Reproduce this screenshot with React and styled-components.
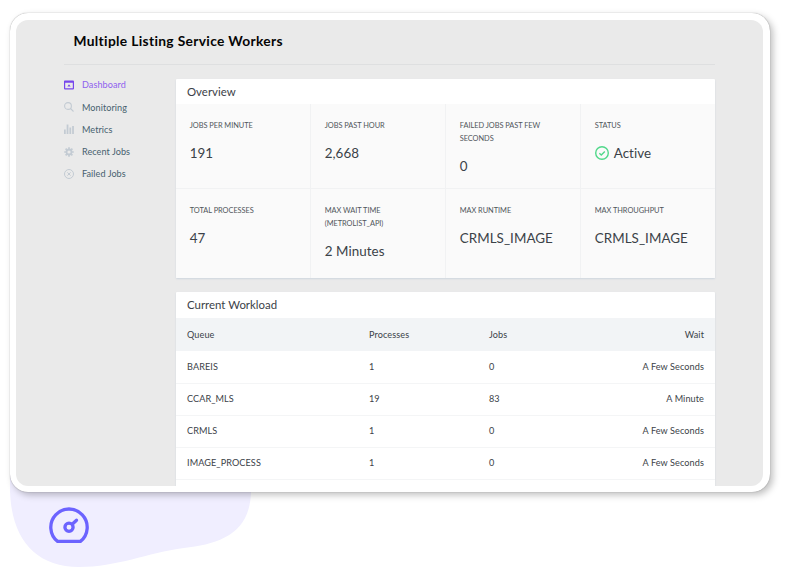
import styled, { createGlobalStyle } from 'styled-components';

const GlobalStyle = createGlobalStyle`
  * {
    box-sizing: border-box;
  }
  body {
    margin: 0;
    background: #fff;
    color: #3b4248;
    font-family: Lato, "Open Sans", sans-serif;
  }
`

const Page = styled.div`
  width: 800px;
  height: 585px;
  padding: 13px 0 0 10px;
  overflow: hidden;
`

const Frame = styled.div`
  position: relative;
  z-index: 1;
  width: 760px;
  height: 479px;
  padding: 7px 7px 6px 6px;
  border-radius: 18px;
  background: #fff;
  box-shadow: 0 0 1px rgba(0, 0, 0, 0.45), 3px 3px 7px rgba(0, 0, 0, 0.25);
`

const Screen = styled.div`
  height: 466px;
  padding: 0 48px;
  border-radius: 12px;
  background: #eaeaea;
  overflow: hidden;
`

const Header = styled.header`
  display: flex;
  align-items: center;
  height: 45px;
  padding: 0 0 4px 9.5px;
  border-bottom: 1px solid #dedfe0;
`

const Title = styled.h1`
  margin: 0;
  color: #050505;
  font-size: 13.8px;
  font-weight: 700;
  letter-spacing: 0.33px;
`

const Body = styled.div`
  display: flex;
  padding-top: 14px;
`

const Sidebar = styled.nav`
  display: flex;
  flex-direction: column;
  flex: 0 0 112px;
  margin-top: -5.4px;
`

const NavItem = styled.a`
  display: flex;
  align-items: center;
  gap: 8px;
  height: 22.3px;
  color: ${props => props.$active ? '#8f62ee' : '#47616f'};
  font-size: 9.1px;
  letter-spacing: 0.05px;

  svg {
    width: 10px;
    height: 10px;
    color: ${props => props.$active ? '#7746ec' : '#c3cbd3'};
  }
`

const Main = styled.main`
  flex: 0 0 539px;
`

const Card = styled.section`
  margin-bottom: 14px;
  border-radius: 1px;
  background: #fff;
  box-shadow: 0 1px 2px #cdd5de;
  overflow: hidden;
`

const CardHeader = styled.h2`
  display: flex;
  align-items: center;
  height: ${props => props.$height}px;
  margin: 0;
  padding: 0 0 1px 11px;
  font-size: 11.4px;
  font-weight: 400;
  letter-spacing: 0.02px;
`

const StatGrid = styled.div`
  display: grid;
  grid-template-columns: 135px 135px 135px 1fr;
  grid-template-rows: 85px 89px;
  background: #fafafa;
`

const Stat = styled.div`
  padding: 14.5px 12px 0 13.7px;
  border-right: 1px solid #f1f2f3;
  border-bottom: 1px solid #f1f2f3;

  &:nth-child(4n) {
    border-right: 0;
  }
  &:nth-child(n + 5) {
    border-bottom: 0;
  }
`

const StatLabel = styled.div`
  color: #50565b;
  font-size: 7.4px;
  line-height: 13px;
  letter-spacing: -0.03px;
  text-transform: uppercase;
  white-space: pre-line;
`

const StatValue = styled.div`
  display: flex;
  align-items: center;
  gap: 5px;
  height: 18px;
  margin-top: 12.5px;
  font-size: 13.4px;
  letter-spacing: 0.06px;

  svg {
    width: 14px;
    height: 14px;
    color: #51d88a;
  }
`

const Table = styled.table`
  width: 100%;
  table-layout: fixed;
  border-collapse: collapse;
  font-size: 9.1px;
  letter-spacing: 0.1px;

  th, td {
    height: 32px;
    padding: 0 0 1px 11px;
    border-bottom: 1px solid #f4f5f6;
    font-weight: 400;
    text-align: left;
  }
  th {
    height: 33px;
    border-bottom: 0;
    background: #f2f4f6;
  }
  th:last-child, td:last-child {
    padding-right: 11px;
    text-align: right;
  }
`

const Blob = styled.svg`
  display: block;
  width: 242px;
  height: 97px;
  margin-top: -22px;
`

function DashboardIcon() {
  return (
    <svg viewBox="0 0 20 20" fill="currentColor">
      <path fillRule="evenodd" d="M0 3c0-1.1.9-2 2-2h16a2 2 0 0 1 2 2v14a2 2 0 0 1-2 2H2a2 2 0 0 1-2-2V3zm2.4 2.5v11h15.2v-11H2.4zm4.4 7.5L10 8.5l3.2 4.5H6.8z" />
    </svg>
  )
}

function SearchIcon() {
  return (
    <svg viewBox="0 0 20 20" fill="none" stroke="currentColor" strokeWidth="2.2">
      <circle cx="8" cy="8" r="6.8" />
      <path d="m13 13 6 6" />
    </svg>
  )
}

function MetricsIcon() {
  return (
    <svg viewBox="0 0 20 20" fill="currentColor">
      <path d="M0 11h3.5v9H0zM5.3 1h3.5v19H5.3zM10.8 7h3.5v13h-3.5zM16.3 4h3.5v16h-3.5z" />
    </svg>
  )
}

function GearIcon() {
  return (
    <svg viewBox="0 0 20 20" fill="none" stroke="currentColor">
      <circle cx="10" cy="10" r="5" strokeWidth="3.6" />
      <path strokeWidth="3.4" d="M10 .5v4M10 15.5v4M.5 10h4M15.5 10h4M3.2 3.2l3 3M13.8 13.8l3 3M16.8 3.2l-3 3M6.2 13.8l-3 3" />
    </svg>
  )
}

function FailedIcon() {
  return (
    <svg viewBox="0 0 20 20" fill="none" stroke="currentColor" strokeWidth="2">
      <circle cx="10" cy="10" r="9" />
      <path d="m6.8 6.8 6.4 6.4M13.2 6.8l-6.4 6.4" />
    </svg>
  )
}

function CheckIcon() {
  return (
    <svg viewBox="0 0 20 20" fill="none" stroke="currentColor" strokeWidth="2">
      <circle cx="10" cy="10" r="9" />
      <path d="m6.2 10.2 2.8 2.6 5-5" />
    </svg>
  )
}

const links = [
  { name: 'Dashboard', icon: DashboardIcon, active: true },
  { name: 'Monitoring', icon: SearchIcon },
  { name: 'Metrics', icon: MetricsIcon },
  { name: 'Recent Jobs', icon: GearIcon },
  { name: 'Failed Jobs', icon: FailedIcon },
]

const stats = [
  { label: 'Jobs Per Minute', value: '191' },
  { label: 'Jobs Past Hour', value: '2,668' },
  { label: 'Failed Jobs Past Few\nSeconds', value: '0' },
  { label: 'Status', value: 'Active', icon: CheckIcon },
  { label: 'Total Processes', value: '47' },
  { label: 'Max Wait Time\n(metrolist_api)', value: '2 Minutes' },
  { label: 'Max Runtime', value: 'CRMLS_IMAGE' },
  { label: 'Max Throughput', value: 'CRMLS_IMAGE' },
]

const queues = [
  ['BAREIS', 1, 0, 'A Few Seconds'],
  ['CCAR_MLS', 19, 83, 'A Minute'],
  ['CRMLS', 1, 0, 'A Few Seconds'],
  ['IMAGE_PROCESS', 1, 0, 'A Few Seconds'],
  ['', '', '', ''],
]

function App() {
  return (
    <>
      <GlobalStyle />
      <Page>
        <Frame>
          <Screen>
            <Header>
              <Title>Multiple Listing Service Workers</Title>
            </Header>
            <Body>
              <Sidebar>
                {links.map(({ name, icon: Icon, active }) => (
                  <NavItem key={name} $active={active}>
                    <Icon />
                    {name}
                  </NavItem>
                ))}
              </Sidebar>
              <Main>
                <Card>
                  <CardHeader $height={25}>Overview</CardHeader>
                  <StatGrid>
                    {stats.map(({ label, value, icon: Icon }) => (
                      <Stat key={label}>
                        <StatLabel>{label}</StatLabel>
                        <StatValue>
                          {Icon && <Icon />}
                          {value}
                        </StatValue>
                      </Stat>
                    ))}
                  </StatGrid>
                </Card>
                <Card>
                  <CardHeader $height={26}>Current Workload</CardHeader>
                  <Table>
                    <colgroup>
                      <col width="182" />
                      <col width="120" />
                      <col width="100" />
                      <col />
                    </colgroup>
                    <thead>
                      <tr>
                        <th>Queue</th>
                        <th>Processes</th>
                        <th>Jobs</th>
                        <th>Wait</th>
                      </tr>
                    </thead>
                    <tbody>
                      {queues.map((row, i) => (
                        <tr key={i}>
                          {row.map((cell, j) => <td key={j}>{cell}</td>)}
                        </tr>
                      ))}
                    </tbody>
                  </Table>
                </Card>
              </Main>
            </Body>
          </Screen>
        </Frame>
        <Blob viewBox="10 470 242 97">
          <path fill="#f0eeff" d="M10 470v20c1 48 25 77 69 77 38 0 68-14 105-19 35-4 67-14 67-58v-20z" />
          <g fill="none" stroke="#6c63ff" strokeWidth="3.3" strokeLinecap="round" strokeLinejoin="round">
            <path d="M57.6 541.4a18.2 18.2 0 1 1 22.8 0z" />
            <circle cx="69" cy="527.3" r="4.1" />
            <path d="m72.2 524.2 4.3-4" />
          </g>
        </Blob>
      </Page>
    </>
  );
}

export default App;
